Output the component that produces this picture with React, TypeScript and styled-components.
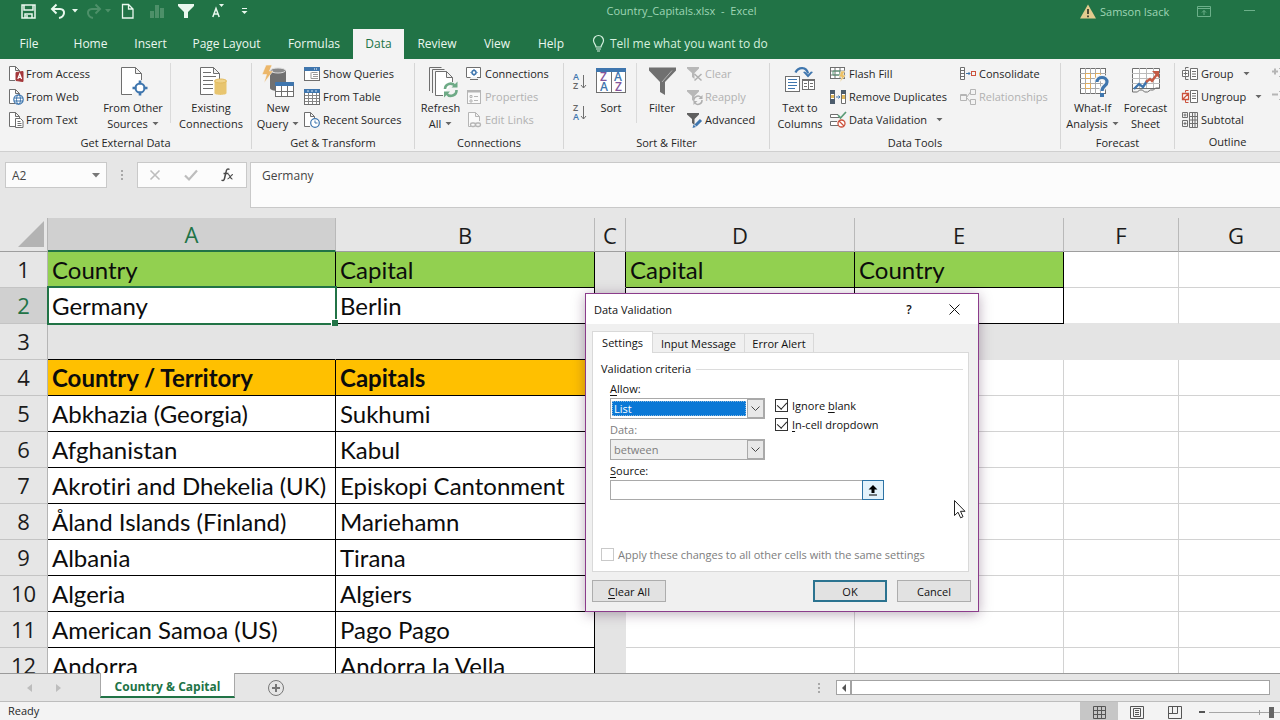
import React from "react";
import styled, { createGlobalStyle, css } from "styled-components";

const ui = '"Open Sans", "Noto Sans", sans-serif';
const cellFont = 'Lato, "Open Sans", sans-serif';
const GREEN = "#217346";
const GREY = "#6f6f6f";
const BLUE = "#3f76ae";

const GlobalStyle = createGlobalStyle`
  * { box-sizing: border-box; }
  body { margin: 0; overflow: hidden; font-family: ${ui}; font-size: 12px; color: #262626; }
  button, input, select, textarea { font: inherit; color: inherit; margin: 0; }
  svg { overflow: visible; }
`;

const Window = styled.div`
  display: flex;
  flex-direction: column;
  height: 100vh;
  overflow: hidden;
  background: #e6e6e6;
`;

const plainButton = css`
  border: 0;
  padding: 0;
  background: transparent;
  cursor: default;
`;

/* ---------- title bar ---------- */

const TitleBar = styled.header`
  display: flex;
  align-items: center;
  flex: none;
  height: 28px;
  padding: 0 24px 6px 20px;
  background: ${GREEN};
  color: #9fd5b5;
`;

const QuickAccess = styled.div`
  display: flex;
  align-items: center;
`;

const QuickButton = styled.button<{ $width: number; $faded?: boolean }>`
  ${plainButton}
  display: flex;
  align-items: center;
  width: ${(p) => p.$width}px;
  height: 20px;
  color: ${(p) => (p.$faded ? "#4d9069" : "#e9f8ee")};
`;

const DocTitle = styled.div`
  flex: 1;
  padding-left: 32px;
  text-align: center;
  font-size: 11px;
  line-height: 22px;
  white-space: pre;
`;

const Account = styled.button`
  ${plainButton}
  display: flex;
  align-items: center;
  gap: 4px;
  width: 117px;
  font-size: 11px;
  white-space: nowrap;
`;

const WindowButton = styled.button`
  ${plainButton}
  display: flex;
  width: 47px;
  &:last-child { width: 12px; }
`;

/* ---------- tabs ---------- */

const TabStrip = styled.nav`
  display: flex;
  flex: none;
  height: 31px;
  background: ${GREEN};
`;

const RibbonTab = styled.button<{ $width: number; $active?: boolean }>`
  ${plainButton}
  width: ${(p) => p.$width}px;
  height: 30px;
  margin-top: 1px;
  font-size: 12px;
  line-height: 30px;
  white-space: nowrap;
  text-align: center;
  background: ${(p) => (p.$active ? "#f3f3f3" : "transparent")};
  color: ${(p) => (p.$active ? GREEN : "#eaf7ef")};
`;

const TellMe = styled.button`
  ${plainButton}
  display: flex;
  align-items: center;
  gap: 5px;
  margin-left: 14px;
  color: #d5f0df;
  white-space: nowrap;
`;

/* ---------- ribbon ---------- */

const Ribbon = styled.section`
  display: flex;
  flex: none;
  height: 93px;
  padding-top: 4px;
  overflow: hidden;
  background: #f3f3f3;
  border-bottom: 1px solid #cfcfcf;
`;

const Group = styled.div<{ $width?: number }>`
  display: flex;
  flex-direction: column;
  flex: ${(p) => (p.$width ? `0 0 ${p.$width}px` : "1 1 0")};
  min-width: 0;
  height: 86px;
  border-right: ${(p) => (p.$width ? "1px solid #d6d6d6" : "0")};
`;

const GroupBody = styled.div<{ $indent?: number }>`
  display: flex;
  height: 70px;
  padding-left: ${(p) => p.$indent ?? 0}px;
`;

const GroupLabel = styled.div`
  padding-top: 2px;
  font-size: 11px;
  line-height: 16px;
  text-align: center;
  white-space: nowrap;
`;

const LargeButton = styled.button<{ $width: number }>`
  ${plainButton}
  display: flex;
  flex-direction: column;
  align-items: center;
  flex: none;
  width: ${(p) => p.$width}px;
  height: 70px;
  padding-top: 2px;
  font-size: 11px;
  line-height: 16px;
  white-space: nowrap;
  & > svg { margin-bottom: 3px; flex: none; }
`;

const SmallColumn = styled.div<{ $width: number }>`
  display: flex;
  flex-direction: column;
  flex: none;
  width: ${(p) => p.$width}px;
`;

const SmallButton = styled.button<{ $gap?: number }>`
  ${plainButton}
  display: flex;
  align-items: center;
  gap: ${(p) => p.$gap ?? 3}px;
  height: 23px;
  padding-bottom: 2px;
  font-size: 11px;
  white-space: nowrap;
  & > svg { flex: none; }
  &:disabled { color: #b1b1b1; }
`;

const InnerRule = styled.div`
  width: 1px;
  height: 60px;
  background: #dadada;
`;

const SortPair = styled.div`
  display: flex;
  flex-direction: column;
  gap: 14px;
  width: 24px;
  padding-top: 10px;
`;

const SortButton = styled.button`
  ${plainButton}
  display: flex;
`;

/* ---------- formula bar ---------- */

const FormulaBar = styled.section`
  display: flex;
  flex: none;
  height: 66px;
  padding: 10px 0 0 5px;
  color: #444;
`;

const NameBox = styled.div`
  display: flex;
  align-items: center;
  width: 102px;
  height: 26px;
  padding: 0 6px;
  background: #fcfcfc;
  border: 1px solid #c9c9c9;
`;

const NameInput = styled.input`
  flex: 1;
  min-width: 0;
  border: 0;
  padding: 0;
  background: transparent;
  outline: 0;
`;

const Dots = styled.div`
  display: flex;
  flex-direction: column;
  justify-content: center;
  align-items: center;
  gap: 2px;
  width: 30px;
  height: 26px;
  & > i { width: 2px; height: 2px; background: #a8a8a8; }
`;

const FormulaButtons = styled.div`
  display: flex;
  align-items: center;
  justify-content: space-around;
  width: 110px;
  height: 26px;
  background: #fcfcfc;
  border: 1px solid #c9c9c9;
`;

const FormulaButton = styled.button`
  ${plainButton}
  display: flex;
`;

const FormulaInput = styled.textarea`
  flex: 1;
  height: 46px;
  margin-left: 3px;
  padding: 4px 11px;
  border: 1px solid #c9c9c9;
  border-right: 0;
  background: #fcfcfc;
  line-height: 18px;
  resize: none;
  outline: 0;
`;

/* ---------- sheet ---------- */

const SheetArea = styled.main`
  flex: 1;
  min-height: 0;
  overflow: hidden;
`;

const Sheet = styled.table`
  width: 1294px;
  table-layout: fixed;
  border-collapse: separate;
  border-spacing: 0;
  font-family: ${cellFont};
  font-size: 24px;
  font-variant-ligatures: none;
  line-height: 34px;
  color: #0c0c0c;
`;

const Corner = styled.th`
  height: 34px;
  padding: 0 3px 2px 0;
  border-right: 1px solid #b5b5b5;
  border-bottom: 1px solid #9e9e9e;
  & > svg { display: block; margin-left: auto; }
`;

const ColumnHead = styled.th<{ $selected?: boolean }>`
  height: 34px;
  padding: 0;
  font-family: ${ui};
  font-size: 22px;
  font-weight: 400;
  line-height: 32px;
  text-align: center;
  background: ${(p) => (p.$selected ? "#d0d0d0" : "#e6e6e6")};
  color: ${(p) => (p.$selected ? GREEN : "#1c1c1c")};
  border-right: 1px solid #b9b9b9;
  border-bottom: ${(p) => (p.$selected ? `2px solid ${GREEN}` : "1px solid #9e9e9e")};
`;

const RowHead = styled.th<{ $selected?: boolean }>`
  height: 36px;
  padding: 0;
  font-family: ${ui};
  font-size: 22px;
  font-weight: 400;
  line-height: 35px;
  text-align: center;
  background: ${(p) => (p.$selected ? "#d0d0d0" : "#e6e6e6")};
  color: ${(p) => (p.$selected ? GREEN : "#1c1c1c")};
  border-right: 1px solid #b5b5b5;
  border-bottom: 1px solid #c4c4c4;
`;

type Tone = "white" | "green" | "amber" | "grey";
const toneColor: Record<Tone, string> = {
  white: "#ffffff",
  green: "#92d050",
  amber: "#ffc000",
  grey: "#e4e4e4",
};

const Cell = styled.td<{ $tone: Tone; $right: string; $bottom: string }>`
  position: relative;
  height: 36px;
  padding: 0 0 0 4px;
  overflow: visible;
  white-space: nowrap;
  font-weight: ${(p) => (p.$tone === "amber" ? 700 : 400)};
  background: ${(p) => toneColor[p.$tone]};
  border-right: 1px solid ${(p) => p.$right};
  border-bottom: 1px solid ${(p) => p.$bottom};
`;

const SelectionFrame = styled.div`
  position: absolute;
  inset: -2px -2px -2px -1px;
  border: 2px solid ${GREEN};
  z-index: 1;
  &::after {
    content: "";
    position: absolute;
    right: -3px;
    bottom: -3px;
    width: 6px;
    height: 6px;
    background: ${GREEN};
    border: 1px solid #fff;
    border-width: 1px 0 0 1px;
  }
`;

/* ---------- bottom bars ---------- */

const SheetTabs = styled.footer`
  display: flex;
  flex: none;
  height: 29px;
  background: #e6e6e6;
  border-top: 1px solid #9a9a9a;
  border-bottom: 1px solid #bdbdbd;
`;

const SheetNav = styled.div`
  display: flex;
  align-items: center;
  gap: 24px;
  width: 100px;
  padding-left: 27px;
`;

const SheetTab = styled.button`
  ${plainButton}
  width: 135px;
  height: 25px;
  margin-top: -1px;
  padding-top: 3px;
  background: #fff;
  border: 1px solid #a8a8a8;
  border-width: 0 1px 2px;
  border-bottom-color: ${GREEN};
  color: ${GREEN};
  font-size: 12px;
  font-weight: 700;
  white-space: nowrap;
`;

const AddSheet = styled.button`
  ${plainButton}
  display: flex;
  align-items: center;
  margin-left: 32px;
`;

const ScrollArea = styled.div`
  display: flex;
  align-items: center;
  margin-left: auto;
  padding-right: 10px;
  & > ${Dots} { width: 34px; }
`;

const ScrollTrack = styled.div`
  display: flex;
  width: 434px;
  height: 15px;
  background: #fff;
  border: 1px solid #a3a3a3;
`;

const ScrollArrow = styled.button`
  ${plainButton}
  display: flex;
  align-items: center;
  justify-content: center;
  width: 15px;
  border-right: 2px solid #a3a3a3;
`;

const StatusBar = styled.footer`
  display: flex;
  align-items: stretch;
  flex: none;
  height: 18px;
  overflow: hidden;
  padding-left: 8px;
  background: #f3f3f3;
  font-size: 11px;
  line-height: 18px;
`;

const StatusTools = styled.div`
  display: flex;
  align-items: stretch;
  width: 200px;
  margin-left: auto;
  overflow: hidden;
`;

const ViewButton = styled.button<{ $active?: boolean }>`
  ${plainButton}
  display: flex;
  align-items: center;
  justify-content: center;
  flex: none;
  width: 38px;
  padding-top: 2px;
  background: ${(p) => (p.$active ? "#c6c6c6" : "transparent")};
`;

const ZoomOut = styled.button`
  ${plainButton}
  display: flex;
  align-items: center;
  flex: none;
  width: 15px;
  padding: 2px 0 0 5px;
`;

const ZoomSlider = styled.input`
  appearance: none;
  flex: none;
  width: 101px;
  height: 18px;
  padding-top: 2px;
  background:
    linear-gradient(#9c9c9c, #9c9c9c) 50px 8px / 1px 5px no-repeat,
    linear-gradient(#a6a6a6, #a6a6a6) 0 10px / 101px 1px no-repeat;
  &::-webkit-slider-thumb {
    appearance: none;
    width: 5px;
    height: 11px;
    background: #666;
  }
`;

/* ---------- dialog ---------- */

const Dialog = styled.div`
  position: absolute;
  left: 585px;
  top: 293px;
  z-index: 5;
  width: 394px;
  border: 1px solid #8b3c8b;
  background: #f0f0f0;
  box-shadow: 0 2px 12px rgba(60, 20, 60, 0.35);
  font-size: 11px;
  color: #111;
`;

const DialogTitle = styled.div`
  display: flex;
  align-items: center;
  height: 30px;
  padding: 0 18px 0 8px;
  background: #fff;
`;

const DialogHeading = styled.h1`
  flex: 1;
  margin: 0;
  font-size: 11px;
  font-weight: 400;
`;

const DialogIconButton = styled.button`
  ${plainButton}
  display: flex;
  align-items: center;
  justify-content: center;
  width: 12px;
  margin-left: 33px;
  font-size: 12px;
  font-weight: 600;
`;

const DialogBody = styled.div`
  padding: 7px 9px 9px 6px;
`;

const DialogTabs = styled.div`
  display: flex;
  align-items: flex-end;
  height: 21px;
`;

const DialogTab = styled.button<{ $width: number; $active?: boolean }>`
  ${plainButton}
  width: ${(p) => p.$width}px;
  height: ${(p) => (p.$active ? 22 : 19)}px;
  margin-bottom: ${(p) => (p.$active ? -1 : 0)}px;
  border: 1px solid #d9d9d9;
  border-width: ${(p) => (p.$active ? "1px 1px 0" : "1px 1px 0 0")};
  background: ${(p) => (p.$active ? "#fff" : "#f0f0f0")};
  position: relative;
  white-space: nowrap;
`;

const Panel = styled.div`
  height: 220px;
  padding: 8px 5px 0 8px;
  background: #fff;
  border: 1px solid #d9d9d9;
`;

const Legend = styled.div`
  display: flex;
  align-items: center;
  gap: 5px;
  line-height: 16px;
  white-space: nowrap;
  &::after { content: ""; flex: 1; height: 1px; background: #dcdcdc; }
`;

const Criteria = styled.div`
  display: flex;
  gap: 10px;
  height: 82px;
  padding: 4px 0 0 9px;
`;

const FieldColumn = styled.div`
  display: flex;
  flex-direction: column;
  width: 155px;
`;

const FieldLabel = styled.label<{ $dim?: boolean }>`
  line-height: 16px;
  color: ${(p) => (p.$dim ? "#7d7d7d" : "#111")};
`;

const SelectBox = styled.div<{ $dim?: boolean }>`
  display: flex;
  height: 21px;
  margin: 1px 0 3px;
  border: 1px solid #a9a9a9;
  background: ${(p) => (p.$dim ? "#efefef" : "#fff")};
`;

const Select = styled.select<{ $focus?: boolean }>`
  appearance: none;
  flex: 1;
  min-width: 0;
  margin: 2px 1px;
  padding: 0 1px;
  line-height: 13px;
  border: ${(p) => (p.$focus ? "1px dotted #8ab8dc" : "1px solid transparent")};
  border-radius: 0;
  outline: 0;
  background: ${(p) => (p.$focus ? "#0a78d6" : "transparent")};
  color: ${(p) => (p.$focus ? "#fff" : "#7d7d7d")};
  opacity: 1;
`;

const SelectArrow = styled.span`
  display: flex;
  align-items: center;
  justify-content: center;
  width: 17px;
  background: #e8e8e8;
  border: 1px solid #a9a9a9;
`;

const CheckColumn = styled.div`
  display: flex;
  flex-direction: column;
  gap: 3px;
  padding-top: 16px;
`;

const CheckLabel = styled.label<{ $dim?: boolean }>`
  display: flex;
  align-items: center;
  gap: 4px;
  height: 16px;
  white-space: nowrap;
  color: ${(p) => (p.$dim ? "#7d7d7d" : "#111")};
`;

const CheckBox = styled.input`
  appearance: none;
  position: relative;
  width: 13px;
  height: 13px;
  border: 1px solid #333;
  background: #fff;
  &:disabled { border-color: #c9c9c9; }
  &:checked::after {
    content: "";
    position: absolute;
    left: 3px;
    top: 0;
    width: 5px;
    height: 8px;
    border: solid #222;
    border-width: 0 1px 1px 0;
    transform: rotate(42deg);
  }
`;

const SourceField = styled.div`
  display: flex;
  flex-direction: column;
  height: 87px;
  padding: 4px 0 0 9px;
`;

const RefBox = styled.div`
  display: flex;
  width: 274px;
  height: 20px;
  margin-top: 1px;
`;

const RefInput = styled.input`
  flex: 1;
  min-width: 0;
  border: 1px solid #a9a9a9;
  border-right: 0;
  outline: 0;
`;

const RefButton = styled.button`
  ${plainButton}
  display: flex;
  align-items: center;
  justify-content: center;
  width: 22px;
  border: 1px solid #2d73a5;
  background: #e3f2fb;
`;

const DialogActions = styled.div`
  display: flex;
  gap: 10px;
  margin: 8px -2px 0 0;
`;

const DialogButton = styled.button<{ $primary?: boolean }>`
  ${plainButton}
  width: 74px;
  height: 22px;
  border: ${(p) => (p.$primary ? "2px solid #2b7390" : "1px solid #adadad")};
  background: #e2e2e2;
  &:first-child { margin-right: auto; }
`;

const Key = styled.span`
  text-decoration: underline;
  text-underline-offset: 2px;
`;

const Pointer = styled.svg`
  position: absolute;
  left: 953px;
  top: 499px;
  z-index: 6;
`;

/* ---------- drawings ---------- */

const Caret = ({ color = "#666" }: { color?: string }) => (
  <svg width="7" height="5" viewBox="0 0 7 5"><path d="M0.5 1h6L3.5 4.2z" fill={color} /></svg>
);

const InlineCaret = styled.span`
  display: inline-block;
  margin-left: 4px;
  vertical-align: 2px;
  line-height: 0;
`;

const GapCaret = styled.span<{ $gap: number }>`
  margin-left: ${(p) => p.$gap}px;
  line-height: 0;
`;

const S = ({ children, w = 16, h = 16 }: { children: React.ReactNode; w?: number; h?: number }) => (
  <svg width={w} height={h} viewBox={`0 0 ${w} ${h}`} fill="none" stroke={GREY} strokeWidth="1">{children}</svg>
);

const page16 = <path d="M6 14.500H.5V.5h6l4 4V6M6.500 .5v4h4" fill="#fff" />;

const AccessIcon = () => (
  <S>{page16}<path d="M7 6.500l7-1v10l-7-1z" fill="#a4373a" stroke="#a4373a" /><path d="M8.800 13l1.900-5 1.900 5M9.500 11.300h2.400" stroke="#fff" strokeWidth="1.200" /></S>
);
const WebIcon = () => (
  <S>{page16}<circle cx="9.500" cy="10.500" r="4.700" fill="#fff" stroke={BLUE} strokeWidth="1.200" /><ellipse cx="9.500" cy="10.500" rx="2" ry="4.700" stroke={BLUE} /><path d="M5 9h9M5 12h9" stroke={BLUE} /></S>
);
const TextIcon = () => (
  <S>{page16}<path d="M6.500 6.500h5l2.500 2.500v6.500H6.500z" fill="#fff" /><path d="M8.500 9.500h3M8.500 11.500h4M8.500 13.500h4" /></S>
);
const OtherSourcesIcon = () => (
  <S w={32} h={32}>
    <path d="M15 29.500H4.500v-27h14l6 6V15M18.500 2.500v6h6" fill="#fff" />
    <circle cx="23" cy="23" r="4.500" fill="#fff" stroke={BLUE} strokeWidth="2" />
    <path d="M23 15.500v4M23 26.500v4M15.500 23h4M26.500 23h4" stroke={BLUE} strokeWidth="2.600" />
  </S>
);
const ExistingIcon = () => (
  <S w={32} h={32}>
    <path d="M18 29.500H5.500v-27h13l6 6V14M18.500 2.500v6h6" fill="#fff" />
    <path d="M8 7.500h8M8 11.500h13M8 15.500h10M8 19.500h10M8 23.500h10" />
    <path d="M19.500 16v12c0 2.500 12 2.500 12 0V16z" fill="#e8c56f" stroke="none" />
    <ellipse cx="25.500" cy="16" rx="6" ry="2" fill="#efd38b" stroke="#e3bb5c" />
  </S>
);
const NewQueryIcon = () => (
  <S w={32} h={32}>
    <path d="M8 5v18c0 4 16 4 16 0V5z" fill="#707070" stroke="none" />
    <ellipse cx="16" cy="5.500" rx="7.500" ry="2.500" fill="#8b8b8b" stroke="#ddd" />
    <path d="M4 0h6L7.500 6h3.500L2 18l2.500-8.500H0z" fill="#ecb76a" stroke="#f3f3f3" strokeWidth=".6" />
    <rect x="13.500" y="17.500" width="18" height="14" fill="#fff" />
    <path d="M13.500 17.500h18v3h-18z" fill={BLUE} stroke={BLUE} /><path d="M19.500 21v10M25.500 21v10M14 26.500h17" />
  </S>
);
const ShowQueriesIcon = () => (
  <S><rect x=".5" y="1.500" width="15" height="13" fill="#fff" /><path d="M.5 1.500h15v3H.5z" fill={BLUE} stroke={BLUE} /><path d="M7 6.500v6h7M7.500 6.500h6M9 8.500h5M9 10.500h5" stroke="#999" /><path d="M10 3h1M12 3h1" stroke="#fff" /></S>
);
const TableIcon = () => (
  <S><rect x=".5" y=".5" width="15" height="15" fill="#fff" /><path d="M.5 .5h15v3H.5z" fill={BLUE} stroke={BLUE} /><path d="M4.500 4v11M8.500 4v11M12.500 4v11M1 6.500h14M1 9.500h14M1 12.500h14" stroke="#868686" /><path d="M3 2h2M7 2h2M11 2h2" stroke="#cfe1f2" /></S>
);
const RecentIcon = () => (
  <S>{page16}<circle cx="11" cy="11" r="4.300" fill="#fff" stroke={BLUE} strokeWidth="1.200" /><path d="M11 8.500V11h2.500" stroke={BLUE} /></S>
);
const RefreshIcon = () => (
  <S w={32} h={32}>
    <path d="M4.500 26V2.500h12M7.500 28V4.500h12" />
    <path d="M18 30.500h-7.500v-24h11l6 6V17M21.500 6.500v6h6" fill="#fff" />
    <path d="M20 24a5.500 5.500 0 0 1 10-3M31.500 25a5.500 5.500 0 0 1-10 3.500" stroke="#6eaa86" strokeWidth="2.600" />
    <path d="M32.500 16.500v6h-6zM19 32.500v-6h6z" fill="#6eaa86" stroke="none" />
  </S>
);
const ConnectionsIcon = () => (
  <S><path d="M.5 11V1.500h14V11M4 13.500h8M.5 11.500h4M11 11.500h4" fill="#fff" /><circle cx="8" cy="6.500" r="2" stroke={BLUE} strokeWidth="1.500" /><path d="M8 3v1M8 9v1M4.500 6.500h1M10.500 6.500h1" stroke={BLUE} /></S>
);
const PropertiesIcon = () => (
  <S><g stroke="#b5b5b5"><rect x="1.500" y="1.500" width="13" height="13" fill="#fafafa" /><path d="M1.500 2.500h13" strokeWidth="2" /><path d="M4 6.500h2v2H4zM4 11h2v2H4zM8 7.500h4M8 11.500h4" /></g></S>
);
const EditLinksIcon = () => (
  <S><g stroke="#b5b5b5"><path d="M5 14.500H2.500V.5h7l4 4V9M9.500 .5v4h4" fill="#fafafa" /><rect x="4.500" y="11" width="5" height="3.500" rx="1.700" strokeWidth="1.400" /><rect x="9.500" y="11" width="5" height="3.500" rx="1.700" strokeWidth="1.400" /></g></S>
);
const SortGlyph = ({ top, bottom }: { top: string; bottom: string }) => (
  <svg width="16" height="17" viewBox="0 0 16 17" fontFamily="Open Sans, sans-serif" fontWeight="600" fontSize="9">
    <text x="1" y="7" fill={top === "A" ? BLUE : "#666"}>{top}</text>
    <text x="1" y="16" fill={bottom === "A" ? BLUE : "#666"}>{bottom}</text>
    <path d="M11.500 2v13M9 12l2.500 3 2.500-3" stroke={GREY} fill="none" />
  </svg>
);
const SortIcon = () => (
  <svg width="30" height="32" viewBox="0 0 30 32" fontFamily="Open Sans, sans-serif" fontWeight="600" fontSize="12">
    <rect x=".5" y="3.500" width="29" height="24" fill="#fff" stroke={GREY} /><path d="M0 3h30v4H0z" fill={BLUE} /><path d="M15.500 7v20" stroke={GREY} />
    <text x="4" y="16" fill="#83549b">Z</text><text x="4" y="26" fill={BLUE}>A</text>
    <text x="18" y="16" fill={BLUE}>A</text><text x="19" y="26" fill="#83549b">Z</text>
  </svg>
);
const FilterIcon = () => (
  <S w={32} h={32}><path d="M3 2.500h27v3L19 17v13l-5-3V17L3 5.500z" fill="#707070" stroke="none" /><path d="M16 17l10-11.500" stroke="#b0b0b0" /></S>
);
const MiniFunnel = ({ color }: { color: string }) => <path d="M0 1h12v1.500L7.500 7v6L5 11V7L0 2.500z" fill={color} stroke="none" />;
const ClearIcon = () => <S><MiniFunnel color="#b8b8b8" /><path d="M7.500 8l7 6.500M14.500 8l-7 6.500" stroke="#b0b0b0" strokeWidth="1.500" /></S>;
const ReapplyIcon = () => (
  <S><MiniFunnel color="#b8b8b8" /><path d="M7 10.500a4 4 0 0 1 7-2M15 11a4 4 0 0 1-7 3" stroke="#b0b0b0" strokeWidth="1.500" /><path d="M15.500 6v4h-4zM6.500 16v-4h4z" fill="#b0b0b0" stroke="none" /></S>
);
const AdvancedIcon = () => <S><MiniFunnel color="#5f5f5f" /><path d="M8.500 13.500l5.500-5.500" stroke={BLUE} strokeWidth="3" /><path d="M5.500 16l1-3.500 2.500 2.500z" fill={BLUE} stroke="none" /></S>;
const TextColumnsIcon = () => (
  <S w={32} h={32}>
    <rect x="1.500" y="11.500" width="14" height="15" fill="#fff" /><path d="M4 14.500h9M4 17.500h9M4 20.500h9M4 23.500h7" stroke={BLUE} />
    <rect x="18.500" y="14.500" width="12" height="10" fill="#fff" /><path d="M18.500 15h12" strokeWidth="2" /><path d="M24.500 15v10M20 18.500h3M20 21.500h3M26 18.500h3M26 21.500h3" />
    <path d="M11.500 7.500c3-6 11-6 12.500 1" stroke={BLUE} strokeWidth="2.400" /><path d="M19 7l5 5.500L29 7l-2-.5-3 3-3-3z" fill={BLUE} stroke="none" />
  </S>
);
const FlashFillIcon = () => (
  <S><rect x=".5" y="1.500" width="14" height="11" fill="#fff" /><path d="M.5 5h14M.5 9h14M5 2v10M10 2v10" /><path d="M3 5h7v4H3z" stroke="#5a9b76" /><path d="M11 5h4l-2 4h3l-6 7 1.500-5H9z" fill="#ecc065" stroke="#f3f3f3" strokeWidth=".5" /></S>
);
const RemoveDupIcon = () => (
  <S><path d="M.5 1.500h4v13h-4zM11.500 1.500h4v13h-4z" fill="#fff" /><path d="M0 1h5v4H0zM0 10h5v5H0zM11 1h5v4h-5z" fill="#4c5c6c" stroke="none" /><path d="M1 6h3v3H1zM12 6h3v4h-3z" fill="#e0b85c" stroke="none" /><path d="M6 8h4M8.500 6.500L10 8 8.500 9.500" stroke={BLUE} /></S>
);
const ValidationIcon = () => (
  <S><path d="M8 2.500H.5v3h9M7 9.500H.5v4H8" fill="#fff" /><path d="M8 3l2.500 3L16 0" stroke="#5a9b76" strokeWidth="1.700" /><circle cx="11.500" cy="11.500" r="3.500" fill="#fff" stroke="#cc523c" strokeWidth="1.300" /><path d="M9 9l5 5" stroke="#cc523c" strokeWidth="1.300" /></S>
);
const ConsolidateIcon = () => (
  <S><path d="M.5 1.500h4v12h-4zM.5 4.500h4M.5 7.500h4M.5 10.500h4" fill="#fff" /><path d="M6 7.500h4M8.500 6L10 7.500 8.500 9" stroke={BLUE} /><rect x="11.500" y="5.500" width="4" height="4" stroke="#cc523c" /></S>
);
const RelationshipsIcon = () => (
  <S><g stroke="#b5b5b5"><path d="M.5 5.500h6v6h-6zM.5 6.500h6M10.500 .5h5v5h-5zM10.500 10.500h5v5h-5zM6.500 8.500L10.500 3M6.500 8.500l4 4.500" /></g></S>
);
const WhatIfIcon = () => (
  <S w={32} h={32}>
    <rect x="3.500" y="3.500" width="25" height="25" fill="#fff" /><path d="M3 8.500h26M3 13.500h26M3 18.500h26M3 23.500h26M8.500 3v26M13.500 3v26M18.500 3v26M23.500 3v26" stroke="#aaa" />
    <path d="M8.500 8.500h5v5h-5zM18.500 8.500h5v5h-5zM8.500 18.500h5v5h-5z" stroke="#e0ad5c" />
    <path d="M20 17c0-6 10-6 10 0 0 4-5 3.500-5 9" stroke="#f3f3f3" strokeWidth="6" /><path d="M20 17c0-6 10-6 10 0 0 4-5 3.500-5 9" stroke={BLUE} strokeWidth="3.200" />
    <rect x="23" y="28" width="4" height="4" fill={BLUE} stroke="none" />
  </S>
);
const ForecastIcon = () => (
  <S w={32} h={32}>
    <path d="M2.500 3.500h27v20h-27z" fill="#fff" /><path d="M2 8.500h28M2 13.500h28M2 18.500h28M9.500 3v20M16.500 3v20M23.500 3v20" stroke="#bbb" />
    <path d="M2.500 23v4h5l2-2h3l2 2h3l3-2h3l2-2h4" /><path d="M4 24l5-5 4 3 4-6" stroke={BLUE} strokeWidth="2.400" /><path d="M16 17l4-3 2 2 6-8" stroke="#c45b45" strokeWidth="2.400" /><path d="M22 6h7v7z" fill="#c45b45" stroke="none" />
  </S>
);
const GroupIcon = () => <S><path d="M6.500 1.500H3.500v2M3.500 11v2.500h3" /><path d="M8.500 2.500h7v11h-7zM10 5.500h4M10 8h4M10 10.500h4" fill="#fff" /><path d="M.5 4.500h6v6h-6zM3.500 5.500v4M1.500 7.500h4" fill="#fff" /></S>;
const UngroupIcon = () => <S><path d="M6.500 1.500H3.500v2M3.500 11v2.500h3" stroke="#cc523c" /><path d="M8.500 1.500h7v12h-7zM10 4.500h4M10 7h4M10 9.500h4" fill="#fff" /><path d="M.5 4.500h6v6h-6zM.5 10.500l6-6" stroke="#cc523c" strokeWidth="1.300" fill="#fff" /></S>;
const SubtotalIcon = () => <S><path d="M.5 .5h5v5h-5zM.5 8.500h5v6h-5zM3 1.500v3M1.500 3h3M3 10v3M1.500 11.500h3M7.500 .5h8v15h-8zM10.500 .5v15M13 .5v15M7.500 4.500h8M7.500 8h8M7.500 11.500h8" /></S>;
const DetailIcon = ({ plus }: { plus: boolean }) => <S><g stroke="#b5b5b5"><path d={plus ? "M0 5.500h6M3 2.500v6" : "M0 5.500h6"} strokeWidth="2" /><path d="M7 2.500h8M9 6.500h6M7 10.500h8" /></g></S>;

/* ---------- data ---------- */

const sheetColumns = [
  { name: "A", width: 288 },
  { name: "B", width: 259 },
  { name: "C", width: 31 },
  { name: "D", width: 229 },
  { name: "E", width: 209 },
  { name: "F", width: 115 },
  { name: "G", width: 115 },
];

const sheetRows: string[][] = [
  ["Country", "Capital", "", "Capital", "Country"],
  ["Germany", "Berlin"],
  [],
  ["Country / Territory", "Capitals"],
  ["Abkhazia (Georgia)", "Sukhumi"],
  ["Afghanistan", "Kabul"],
  ["Akrotiri and Dhekelia (UK)", "Episkopi Cantonment"],
  ["Åland Islands (Finland)", "Mariehamn"],
  ["Albania", "Tirana"],
  ["Algeria", "Algiers"],
  ["American Samoa (US)", "Pago Pago"],
  ["Andorra", "Andorra la Vella"],
];

const LINE = "#d2d2d2";
const BLACK = "#000";

function cellLook(row: number, col: number) {
  const isList = col < 2;
  const top = row < 3;
  let tone: Tone = "white";
  if (row === 3 || col === 2) tone = "grey";
  else if (row === 1 && col < 5) tone = "green";
  else if (row === 4 && isList) tone = "amber";
  const grey = toneColor.grey;
  let right = LINE;
  let bottom = LINE;
  if (row === 3) {
    right = grey;
    bottom = isList ? BLACK : grey;
  } else if (col === 2) {
    right = top ? BLACK : grey;
    bottom = grey;
  } else {
    if (isList || (top && col < 5)) right = BLACK;
    if (isList || (top && col < 5)) bottom = BLACK;
  }
  if (row === 2 && col > 4) bottom = grey;
  return { tone, right, bottom };
}

const ribbonTabs: [string, number][] = [
  ["File", 58], ["Home", 65], ["Insert", 55], ["Page Layout", 97], ["Formulas", 78],
  ["Data", 51], ["Review", 66], ["View", 54], ["Help", 54],
];

export default function App() {
  return (
    <>
      <GlobalStyle />
      <Window>
        <TitleBar>
          <QuickAccess>
            <QuickButton $width={30} aria-label="Save">
              <svg width="16" height="16" viewBox="0 0 16 16" fill="none" stroke="currentColor" strokeWidth="1.500"><path d="M2 2h13v13H2zM4 2v5h9V2M5 15v-4h7v4M7 12v3" /></svg>
            </QuickButton>
            <QuickButton $width={22} aria-label="Undo">
              <svg width="16" height="16" viewBox="0 0 16 16" fill="none" stroke="currentColor" strokeWidth="2"><path d="M2 6h8c6 0 5 8-1 9M6.500 1.500L2 6l4.500 4.500" /></svg>
            </QuickButton>
            <QuickButton $width={14} aria-label="Undo list"><svg width="6" height="4"><path d="M0 0h6L3 3.500z" fill="currentColor" /></svg></QuickButton>
            <QuickButton $width={19} $faded aria-label="Redo">
              <svg width="16" height="16" viewBox="0 0 16 16" fill="none" stroke="currentColor" strokeWidth="2"><path d="M14 6H6C0 6 1 14 7 15M9.500 1.500L14 6l-4.500 4.500" /></svg>
            </QuickButton>
            <QuickButton $width={15} $faded aria-label="Redo list"><svg width="6" height="4"><path d="M0 0h6L3 3.500z" fill="currentColor" /></svg></QuickButton>
            <QuickButton $width={29} aria-label="New">
              <svg width="16" height="16" viewBox="0 0 16 16" fill="none" stroke="currentColor" strokeWidth="1.300"><path d="M2.500 1.500h6l4.500 4.500v9H2.500zM8.500 1.500V6H13" /></svg>
            </QuickButton>
            <QuickButton $width={29} $faded aria-label="Chart">
              <svg width="16" height="16" viewBox="0 0 16 16" fill="currentColor"><path d="M1 8h4v7H1zM6 2h4v13H6zM11 5h4v10h-4z" /></svg>
            </QuickButton>
            <QuickButton $width={34} aria-label="Filter">
              <svg width="16" height="16" viewBox="0 0 16 16" fill="currentColor"><path d="M0 1h16v2l-6 6v6H6V9L0 3z" /></svg>
            </QuickButton>
            <QuickButton $width={29} aria-label="Font size">
              <svg width="12" height="16" viewBox="0 0 12 16" fill="none" stroke="currentColor" strokeWidth="1.500"><path d="M.8 14L4 5.500 7.200 14M2 11h4" /><path d="M7 1h5L9.500 4z" fill="currentColor" stroke="none" /></svg>
            </QuickButton>
            <QuickButton $width={10} aria-label="Customize">
              <svg width="7" height="8" viewBox="0 0 7 8"><path d="M1 1.500h5" stroke="currentColor" /><path d="M.5 4h6L3.500 7z" fill="currentColor" /></svg>
            </QuickButton>
          </QuickAccess>
          <DocTitle>{"Country_Capitals.xlsx  -  Excel"}</DocTitle>
          <Account>
            <svg width="16" height="15" viewBox="0 0 16 15"><path d="M8 .5L16 14.500H0z" fill="#e3cb8e" /><path d="M8 5v5M8 11.500v1.800" stroke="#3d3d2c" strokeWidth="1.800" /></svg>
            Samson Isack
          </Account>
          <WindowButton aria-label="Ribbon display options">
            <svg width="14" height="11" viewBox="0 0 14 11" fill="none" stroke="#6cb08a"><path d="M.5 .5h13v10H.5zM.5 2.500h13M7 9V4.500M5 6.500l2-2 2 2" /></svg>
          </WindowButton>
          <WindowButton aria-label="Minimize"><svg width="11" height="2"><path d="M0 .5h11" stroke="#6cb08a" /></svg></WindowButton>
        </TitleBar>

        <TabStrip>
          {ribbonTabs.map(([name, width]) => (
            <RibbonTab key={name} $width={width} $active={name === "Data"}>{name}</RibbonTab>
          ))}
          <TellMe>
            <svg width="13" height="17" viewBox="0 0 13 17" fill="none" stroke="currentColor" strokeWidth="1.200"><path d="M4 12c0-2.500-2.500-3.500-2.500-6.500a5 5 0 0 1 10 0C11.500 8.500 9 9.500 9 12zM4 14h5M5 16h3" /></svg>
            Tell me what you want to do
          </TellMe>
        </TabStrip>

        <Ribbon>
          <Group $width={252}>
            <GroupBody $indent={9}>
              <SmallColumn $width={87}>
                <SmallButton $gap={1}><AccessIcon />From Access</SmallButton>
                <SmallButton $gap={1}><WebIcon />From Web</SmallButton>
                <SmallButton $gap={1}><TextIcon />From Text</SmallButton>
              </SmallColumn>
              <LargeButton $width={74}><OtherSourcesIcon /><span>From Other</span><span>Sources<InlineCaret><Caret /></InlineCaret></span></LargeButton>
              <InnerRule />
              <LargeButton $width={80}><ExistingIcon /><span>Existing</span><span>Connections</span></LargeButton>
            </GroupBody>
            <GroupLabel>Get External Data</GroupLabel>
          </Group>

          <Group $width={163}>
            <GroupBody>
              <LargeButton $width={52}><NewQueryIcon /><span>New</span><span>Query<InlineCaret><Caret /></InlineCaret></span></LargeButton>
              <SmallColumn $width={108}>
                <SmallButton><ShowQueriesIcon />Show Queries</SmallButton>
                <SmallButton><TableIcon />From Table</SmallButton>
                <SmallButton><RecentIcon />Recent Sources</SmallButton>
              </SmallColumn>
            </GroupBody>
            <GroupLabel>Get &amp; Transform</GroupLabel>
          </Group>

          <Group $width={149}>
            <GroupBody>
              <LargeButton $width={51}><RefreshIcon /><span>Refresh</span><span>All<InlineCaret><Caret /></InlineCaret></span></LargeButton>
              <SmallColumn $width={94}>
                <SmallButton><ConnectionsIcon />Connections</SmallButton>
                <SmallButton disabled><PropertiesIcon />Properties</SmallButton>
                <SmallButton disabled><EditLinksIcon />Edit Links</SmallButton>
              </SmallColumn>
            </GroupBody>
            <GroupLabel>Connections</GroupLabel>
          </Group>

          <Group $width={206}>
            <GroupBody $indent={8}>
              <SortPair>
                <SortButton aria-label="Sort A to Z"><SortGlyph top="A" bottom="Z" /></SortButton>
                <SortButton aria-label="Sort Z to A"><SortGlyph top="Z" bottom="A" /></SortButton>
              </SortPair>
              <LargeButton $width={30}><SortIcon /><span>Sort</span></LargeButton>
              <SmallColumn $width={10} />
              <InnerRule />
              <LargeButton $width={50}><FilterIcon /><span>Filter</span></LargeButton>
              <SmallColumn $width={80}>
                <SmallButton disabled $gap={2}><ClearIcon />Clear</SmallButton>
                <SmallButton disabled $gap={2}><ReapplyIcon />Reapply</SmallButton>
                <SmallButton $gap={2}><AdvancedIcon />Advanced</SmallButton>
              </SmallColumn>
            </GroupBody>
            <GroupLabel>Sort &amp; Filter</GroupLabel>
          </Group>

          <Group $width={291}>
            <GroupBody>
              <LargeButton $width={60}><TextColumnsIcon /><span>Text to</span><span>Columns</span></LargeButton>
              <SmallColumn $width={130}>
                <SmallButton><FlashFillIcon />Flash Fill</SmallButton>
                <SmallButton><RemoveDupIcon />Remove Duplicates</SmallButton>
                <SmallButton><ValidationIcon />Data Validation<GapCaret $gap={6}><Caret /></GapCaret></SmallButton>
              </SmallColumn>
              <SmallColumn $width={96}>
                <SmallButton><ConsolidateIcon />Consolidate</SmallButton>
                <SmallButton disabled><RelationshipsIcon />Relationships</SmallButton>
              </SmallColumn>
            </GroupBody>
            <GroupLabel>Data Tools</GroupLabel>
          </Group>

          <Group $width={114}>
            <GroupBody $indent={5}>
              <LargeButton $width={53}><WhatIfIcon /><span>What-If</span><span>Analysis<InlineCaret><Caret /></InlineCaret></span></LargeButton>
              <LargeButton $width={53}><ForecastIcon /><span>Forecast</span><span>Sheet</span></LargeButton>
            </GroupBody>
            <GroupLabel>Forecast</GroupLabel>
          </Group>

          <Group>
            <GroupBody $indent={7}>
              <SmallColumn $width={90}>
                <SmallButton><GroupIcon />Group<GapCaret $gap={6}><Caret /></GapCaret></SmallButton>
                <SmallButton><UngroupIcon />Ungroup<GapCaret $gap={6}><Caret /></GapCaret></SmallButton>
                <SmallButton><SubtotalIcon />Subtotal</SmallButton>
              </SmallColumn>
              <SmallColumn $width={16}>
                <SmallButton disabled aria-label="Show detail"><DetailIcon plus /></SmallButton>
                <SmallButton disabled aria-label="Hide detail"><DetailIcon plus={false} /></SmallButton>
              </SmallColumn>
            </GroupBody>
            <GroupLabel>Outline</GroupLabel>
          </Group>
        </Ribbon>

        <FormulaBar>
          <NameBox>
            <NameInput aria-label="Name box" defaultValue="A2" />
            <svg width="8" height="5"><path d="M0 0h8L4 4.500z" fill="#777" /></svg>
          </NameBox>
          <Dots><i /><i /><i /></Dots>
          <FormulaButtons>
            <FormulaButton aria-label="Cancel entry"><svg width="12" height="12" viewBox="0 0 12 12"><path d="M1.500 1.500l9 9M10.500 1.500l-9 9" stroke="#bdbdbd" strokeWidth="1.600" /></svg></FormulaButton>
            <FormulaButton aria-label="Enter"><svg width="14" height="12" viewBox="0 0 14 12"><path d="M1 6.500L5 10.500 13 1.500" fill="none" stroke="#bdbdbd" strokeWidth="2.200" /></svg></FormulaButton>
            <FormulaButton aria-label="Insert function">
              <svg width="14" height="16" viewBox="0 0 14 16" fill="none" stroke="#4a4a4a"><path d="M8.500 2.500C6.500 1 5.500 2.500 5 5L3.500 11.500C3 13.500 2 14 .5 13M2.500 6.500h5" strokeWidth="1.500" /><path d="M7 7.500c2-.5 2 5 4.500 4.500M12 7.500c-2 0-3.500 4.500-5.500 4.500" strokeWidth="1.200" /></svg>
            </FormulaButton>
          </FormulaButtons>
          <FormulaInput aria-label="Formula" defaultValue="Germany" spellCheck={false} />
        </FormulaBar>

        <SheetArea>
          <Sheet>
            <colgroup>
              <col style={{ width: 48 }} />
              {sheetColumns.map((c) => <col key={c.name} style={{ width: c.width }} />)}
            </colgroup>
            <thead>
              <tr>
                <Corner aria-label="Select all"><svg width="26" height="26"><path d="M26 0v26H0z" fill="#b3b3b3" /></svg></Corner>
                {sheetColumns.map((c) => <ColumnHead key={c.name} $selected={c.name === "A"}>{c.name}</ColumnHead>)}
              </tr>
            </thead>
            <tbody>
              {sheetRows.map((values, r) => (
                <tr key={r}>
                  <RowHead $selected={r === 1}>{r + 1}</RowHead>
                  {sheetColumns.map((c, i) => {
                    const look = cellLook(r + 1, i);
                    return (
                      <Cell key={c.name} $tone={look.tone} $right={look.right} $bottom={look.bottom}>
                        {values[i] ?? ""}
                        {r === 1 && i === 0 && <SelectionFrame />}
                      </Cell>
                    );
                  })}
                </tr>
              ))}
            </tbody>
          </Sheet>
        </SheetArea>

        <SheetTabs>
          <SheetNav>
            <svg width="5" height="8"><path d="M5 0v8L0 4z" fill="#bdbdbd" /></svg>
            <svg width="5" height="8"><path d="M0 0v8l5-4z" fill="#bdbdbd" /></svg>
          </SheetNav>
          <SheetTab>Country &amp; Capital</SheetTab>
          <AddSheet aria-label="New sheet">
            <svg width="18" height="18" viewBox="0 0 18 18" fill="none" stroke="#777"><circle cx="9" cy="9" r="7.500" /><path d="M9 5v8M5 9h8" strokeWidth="2" /></svg>
          </AddSheet>
          <ScrollArea>
            <Dots><i /><i /><i /></Dots>
            <ScrollTrack><ScrollArrow aria-label="Scroll left"><svg width="4" height="8"><path d="M4 0v8L0 4z" fill="#555" /></svg></ScrollArrow></ScrollTrack>
          </ScrollArea>
        </SheetTabs>

        <StatusBar>
          Ready
          <StatusTools>
            <ViewButton $active aria-label="Normal view"><svg width="13" height="13" fill="none" stroke="#555"><path d="M.5 .5h12v12H.5zM4.500 0v13M8.500 0v13M0 4.500h13M0 8.500h13" /></svg></ViewButton>
            <ViewButton aria-label="Page layout view"><svg width="14" height="13" fill="none" stroke="#555"><path d="M.5 .5h13v12H.5zM3.500 2.500h7v8h-7zM5 4.500h4M5 6.500h4M5 8.500h4" /></svg></ViewButton>
            <ViewButton aria-label="Page break view"><svg width="14" height="13" fill="none" stroke="#555"><path d="M.5 .5h13v12H.5zM4.500 .5v7M9.500 .5v7M0 7.500h9.500" /></svg></ViewButton>
            <ZoomOut aria-label="Zoom out"><svg width="6" height="2"><path d="M0 1h6" stroke="#555" strokeWidth="2" /></svg></ZoomOut>
            <ZoomSlider type="range" aria-label="Zoom" min={0} max={100} defaultValue={63} />
          </StatusTools>
        </StatusBar>
      </Window>

      <Dialog role="dialog" aria-label="Data Validation">
        <DialogTitle>
          <DialogHeading>Data Validation</DialogHeading>
          <DialogIconButton aria-label="Help">?</DialogIconButton>
          <DialogIconButton aria-label="Close"><svg width="11" height="11" viewBox="0 0 11 11"><path d="M.5 .5l10 10M10.500 .5l-10 10" stroke="#111" /></svg></DialogIconButton>
        </DialogTitle>
        <DialogBody>
          <DialogTabs>
            <DialogTab $width={61} $active>Settings</DialogTab>
            <DialogTab $width={92}>Input Message</DialogTab>
            <DialogTab $width={69}>Error Alert</DialogTab>
          </DialogTabs>
          <Panel>
            <Legend>Validation criteria</Legend>
            <Criteria>
              <FieldColumn>
                <FieldLabel htmlFor="allow"><Key>A</Key>llow:</FieldLabel>
                <SelectBox>
                  <Select id="allow" $focus><option>List</option></Select>
                  <SelectArrow><svg width="9" height="6" fill="none" stroke="#444"><path d="M.5 .5l4 4 4-4" /></svg></SelectArrow>
                </SelectBox>
                <FieldLabel htmlFor="data" $dim>Data:</FieldLabel>
                <SelectBox $dim>
                  <Select id="data" disabled><option>between</option></Select>
                  <SelectArrow><svg width="9" height="6" fill="none" stroke="#444"><path d="M.5 .5l4 4 4-4" /></svg></SelectArrow>
                </SelectBox>
              </FieldColumn>
              <CheckColumn>
                <CheckLabel><CheckBox type="checkbox" defaultChecked /><span>Ignore <Key>b</Key>lank</span></CheckLabel>
                <CheckLabel><CheckBox type="checkbox" defaultChecked /><span><Key>I</Key>n-cell dropdown</span></CheckLabel>
              </CheckColumn>
            </Criteria>
            <SourceField>
              <FieldLabel htmlFor="source"><Key>S</Key>ource:</FieldLabel>
              <RefBox>
                <RefInput id="source" />
                <RefButton aria-label="Collapse dialog"><svg width="10" height="11"><path d="M5 0l4.500 4.500h-3V8h-3V4.500h-3zM1 9.500h8v1H1z" fill="#000" /></svg></RefButton>
              </RefBox>
            </SourceField>
            <CheckLabel $dim><CheckBox type="checkbox" disabled />Apply these changes to all other cells with the same settings</CheckLabel>
          </Panel>
          <DialogActions>
            <DialogButton><Key>C</Key>lear All</DialogButton>
            <DialogButton $primary>OK</DialogButton>
            <DialogButton>Cancel</DialogButton>
          </DialogActions>
        </DialogBody>
      </Dialog>

      <Pointer width="14" height="21" viewBox="0 0 14 21"><path d="M1.500 1.500v15l3.500-3.300 2.600 5.600 2.400-1.100-2.500-5.400h4.500z" fill="#fff" stroke="#222" /></Pointer>
    </>
  );
}
